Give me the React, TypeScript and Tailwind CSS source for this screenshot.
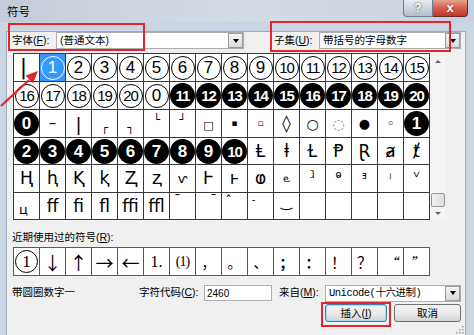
import { clsx } from "clsx"

type Item = { t: string; k?: "c" | "n"; c?: string }

const c = (t: string): Item => ({ t, k: "c" })
const n = (t: string): Item => ({ t, k: "n" })
const g = (t: string, cls = "text-[17px]"): Item => ({ t, c: cls })
const e: Item = { t: "" }

const rows: Item[][] = [
  [
    g("|", "text-[22px] -translate-x-[3px] -translate-y-[1px]"),
    c("1"), c("2"), c("3"), c("4"), c("5"), c("6"), c("7"), c("8"),
    c("9"), c("10"), c("11"), c("12"), c("13"), c("14"), c("15"),
  ],
  [
    c("16"), c("17"), c("18"), c("19"), c("20"), c("0"),
    n("11"), n("12"), n("13"), n("14"), n("15"), n("16"), n("17"), n("18"), n("19"), n("20"),
  ],
  [
    n("0"),
    g("–", "text-[15px]"),
    g("|", "text-[18px] translate-y-[1px]"),
    g("┌", "text-[11px] translate-y-[4px]"),
    g("┐", "text-[11px] translate-y-[4px]"),
    g("└", "text-[11px] -translate-y-[4px]"),
    g("┘", "text-[11px] -translate-y-[4px]"),
    g("□", "text-[11px] translate-y-[2px]"),
    g("▪", "text-[9px]"),
    g("▫", "text-[9px]"),
    g("◊", "text-[17px]"),
    g("○", "text-[14px]"),
    g("◌", "text-[14px] text-[#8a8a8a]"),
    g("●", "text-[13px]"),
    g("◦", "text-[13px]"),
    n("1"),
  ],
  [
    n("2"), n("3"), n("4"), n("5"), n("6"), n("7"), n("8"), n("9"), n("10"),
    g("Ⱡ"), g("ⱡ"), g("Ɫ"), g("Ᵽ"), g("Ɽ"), g("ⱥ"), g("ⱦ"),
  ],
  [
    g("Ⱨ"), g("ⱨ"), g("Ⱪ"), g("ⱪ"), g("Ⱬ"), g("ⱬ"),
    g("ⱱ", "text-[13px]"),
    g("Ⱶ"), g("ⱶ"), g("ⱷ"),
    g("ⱸ", "text-[10px]"),
    g("ⱹ", "text-[10px] -translate-y-[4px]"),
    g("ⱺ", "text-[10px] -translate-y-[4px]"),
    g("ⱻ", "text-[10px] -translate-y-[3px]"),
    g("ⱼ", "text-[11px] -translate-y-[4px]"),
    g("ⱽ", "text-[14px] -translate-y-[2px]"),
  ],
  [
    g("ц", "text-[13px] translate-y-[3px] -translate-x-[3px]"),
    g("ﬀ"), g("ﬁ"), g("ﬂ"), g("ﬃ"), g("ﬄ"),
    g("ˉ", "text-[14px] -translate-y-[6px] -translate-x-[5px]"),
    g("ˉ", "text-[14px] -translate-y-[6px] translate-x-[5px]"),
    g("ˆ", "text-[13px] -translate-y-[6px] -translate-x-[6px]"),
    g("-", "text-[10px] -translate-y-[6px] -translate-x-[7px]"),
    g("‿", "text-[14px] -translate-y-[4px]"),
    e, e, e, e, e,
  ],
]

const recent: Item[] = [
  c("1"),
  g("↓", "text-[18px] font-['Noto_Sans_CJK_SC',sans-serif]"),
  g("↑", "text-[18px] font-['Noto_Sans_CJK_SC',sans-serif]"),
  g("→", "text-[18px] font-['Noto_Sans_CJK_SC',sans-serif]"),
  g("←", "text-[18px] font-['Noto_Sans_CJK_SC',sans-serif]"),
  g("1.", "text-[16px] font-['Liberation_Serif',serif]"),
  g("(1)", "text-[14px] tracking-[-1px] font-['Liberation_Serif',serif]"),
  g("，", "text-[14px] font-['Noto_Sans_CJK_SC',sans-serif]"),
  g("。", "text-[14px] font-['Noto_Sans_CJK_SC',sans-serif]"),
  g("、", "text-[14px] font-['Noto_Sans_CJK_SC',sans-serif]"),
  g("；", "text-[14px] font-['Noto_Sans_CJK_SC',sans-serif] font-bold"),
  g("：", "text-[14px] font-['Noto_Sans_CJK_SC',sans-serif] font-bold"),
  g("！", "text-[15px] font-['Noto_Sans_CJK_SC',sans-serif]"),
  g("？", "text-[15px] font-['Noto_Sans_CJK_SC',sans-serif]"),
  g("“", "text-[14px] font-['Noto_Sans_CJK_SC',sans-serif] italic"),
  g("”", "text-[14px] font-['Noto_Sans_CJK_SC',sans-serif] italic"),
]

function Sym({ it, sel }: { it: Item; sel?: boolean }) {
  if (it.k) {
    const two = it.t.length > 1
    return (
      <div
        className={clsx(
          "flex shrink-0 items-center justify-center rounded-full font-['Liberation_Sans',sans-serif] leading-none",
          it.k === "n" ? "h-[25px] w-[25px] bg-black font-bold text-white" : "h-[24px] w-[24px] border",
          it.k === "c" && (sel ? "border-white text-white" : "border-black text-black"),
          two ? "text-[15px] tracking-[-1px]" : "text-[17px]",
        )}
      >
        {it.t}
      </div>
    )
  }
  return <span className={clsx("leading-none font-['DejaVu_Sans',sans-serif]", it.c)}>{it.t}</span>
}

function Arrow() {
  return (
    <span className="h-0 w-0 border-x-[3.5px] border-t-[4px] border-x-transparent border-t-black" />
  )
}

function Combo({ w, children, mono }: { w: string; children: React.ReactNode; mono?: boolean }) {
  return (
    <div className={clsx("flex h-[17px] border border-[#abadb3] bg-white", w)}>
      <div
        className={clsx(
          "flex flex-1 items-center pl-[3px] leading-none whitespace-nowrap",
          mono ? "text-[10.5px] font-['Liberation_Mono','Noto_Sans_CJK_SC',monospace] tracking-[-0.5px]" : "text-[10.5px]",
        )}
      >
        {children}
      </div>
      <div className="flex w-[15px] items-center justify-center border border-[#9a9a9a] bg-linear-to-b from-[#f6f6f6] to-[#d9d9d9]">
        <Arrow />
      </div>
    </div>
  )
}

function Btn({ w, children, focus }: { w: string; children: React.ReactNode; focus?: boolean }) {
  return (
    <div
      className={clsx(
        "flex h-[18px] items-center justify-center rounded-[3px] border bg-linear-to-b from-[#f4f4f4] via-[#ebebeb] to-[#d4d4d4] text-[10.5px] leading-none",
        focus ? "border-[#3c7fb1] shadow-[inset_0_0_0_1px_#a8dcf6]" : "border-[#707070]",
        w,
      )}
    >
      {children}
    </div>
  )
}

export default function App() {
  return (
    <div className="relative h-[335px] w-[474px] overflow-hidden bg-[#c9d5e2] font-['Liberation_Sans','Noto_Sans_CJK_SC',sans-serif] text-black">
      {/* title bar */}
      <div className="flex h-[22px] items-start bg-linear-to-r from-[#c3ccd8] via-[#d4dce6] to-[#c8d2de]">
        <span className="pt-[5px] pl-[7px] text-[11.5px] leading-[14px]">符号</span>
        <div className="mr-[6px] ml-auto flex">
          <div className="flex h-[17px] w-[30px] items-center justify-center rounded-bl-[4px] border border-t-0 border-[#6f7c8c] bg-linear-to-b from-[#e8edf3] to-[#b3bfcd] text-[12px] font-bold text-white [text-shadow:0_0_2px_#333]">
            ?
          </div>
          <div className="flex h-[17px] w-[35px] items-center justify-center rounded-br-[4px] border border-t-0 border-l-0 border-[#6b2a22] bg-linear-to-b from-[#e7a194] via-[#d45e4d] to-[#c2382a] text-[13px] font-bold text-white [text-shadow:0_0_2px_#5a1a12]">
            x
          </div>
        </div>
      </div>

      {/* dialog body */}
      <div className="relative ml-[7px] h-[303px] w-[458px] bg-[#f0f0f0] text-[10.5px] shadow-[0_0_0_1px_#9eacbd]">
        <div className="mt-[10px] flex h-[17px] items-center pl-[5px]">
          <span className="w-[44px]">
            字体(<span className="underline">F</span>):
          </span>
          <Combo w="w-[188px]">(普通文本)</Combo>
          <span className="ml-[30px] w-[45px]">
            子集(<span className="underline">U</span>):
          </span>
          <Combo w="w-[142px]">带括号的字母数字</Combo>
        </div>

        {/* symbol grid */}
        <div className="mt-[4px] ml-[6px] flex h-[167px]">
          <div className="grid grid-cols-[repeat(16,26px)] grid-rows-[28px_28px_28px_27px_28px_27px] border-t border-l border-[#3a3a3a] bg-white">
            {rows.map((row, r) =>
              row.map((it, i) => {
                const sel = r === 0 && i === 1
                return (
                  <div
                    key={`${r}-${i}`}
                    className={clsx(
                      "flex items-center justify-center overflow-hidden border-r border-b border-[#3a3a3a]",
                      sel && "bg-[#3399ff]",
                    )}
                  >
                    <Sym it={it} sel={sel} />
                  </div>
                )
              }),
            )}
          </div>
          <div className="flex w-[16px] flex-col bg-[#f3f3f3]">
            <div className="flex h-[16px] items-center justify-center">
              <span className="h-0 w-0 border-x-[3px] border-b-[3px] border-x-transparent border-b-[#606060]" />
            </div>
            <div className="flex-1" />
            <div className="mx-[1px] h-[14px] rounded-[2px] border border-[#979797] bg-linear-to-r from-[#f3f3f3] to-[#dcdcdc]" />
            <div className="flex h-[13px] items-center justify-center">
              <span className="h-0 w-0 border-x-[3px] border-t-[3px] border-x-transparent border-t-[#606060]" />
            </div>
          </div>
        </div>

        <div className="mt-[10px] h-[14px] pl-[5px] leading-[14px]">
          近期使用过的符号(<span className="underline">R</span>):
        </div>

        <div className="mt-[3px] ml-[6px] flex w-fit border-t border-l border-[#5a5a5a] bg-white">
          {recent.map((it, i) => (
            <div
              key={i}
              className="flex h-[28px] w-[26px] items-center justify-center overflow-hidden border-r border-b border-[#5a5a5a]"
            >
              {it.k ? (
                <div className="flex h-[23px] w-[23px] items-center justify-center rounded-full border border-black font-['Liberation_Serif',serif] text-[17px] leading-none">
                  1
                </div>
              ) : (
                <Sym it={it} />
              )}
            </div>
          ))}
        </div>

        <div className="mt-[9px] flex h-[16px] items-center pl-[5px]">
          <span className="w-[127px]">带圆圈数字一</span>
          <span className="w-[65px]">
            字符代码(<span className="underline">C</span>):
          </span>
          <div className="flex h-[16px] w-[68px] items-center border border-[#abadb3] bg-white pl-[2px] text-[10px]">
            2460
          </div>
          <span className="ml-[7px] w-[46px]">
            来自(<span className="underline">M</span>):
          </span>
          <Combo w="w-[136px]" mono>
            Unicode(十六进制)
          </Combo>
        </div>

        <div className="mt-[3px] flex justify-end gap-[7px] pr-[4px]">
          <Btn w="w-[62px]" focus>
            插入(<span className="underline">I</span>)
          </Btn>
          <Btn w="w-[67px]">取消</Btn>
        </div>

        <svg className="absolute right-[1px] bottom-[1px]" width="9" height="9" viewBox="0 0 9 9">
          <g fill="#a0a0a0">
            <rect x="7" y="1" width="1.5" height="1.5" />
            <rect x="4" y="4" width="1.5" height="1.5" />
            <rect x="7" y="4" width="1.5" height="1.5" />
            <rect x="1" y="7" width="1.5" height="1.5" />
            <rect x="4" y="7" width="1.5" height="1.5" />
            <rect x="7" y="7" width="1.5" height="1.5" />
          </g>
        </svg>
      </div>

      {/* red annotation boxes */}
      <div className="absolute top-[23px] left-[8px] h-[28px] w-[137px] border-2 border-[#e4252b]" />
      <div className="absolute top-[21px] left-[270px] h-[31px] w-[181px] border-2 border-[#e4252b]" />
      <div className="absolute top-[302px] left-[321px] h-[25px] w-[70px] border-2 border-[#e4252b]" />

      {/* red arrow */}
      <svg className="absolute top-0 left-0" width="50" height="115" viewBox="0 0 50 115">
        <line x1="1" y1="106" x2="29" y2="80" stroke="#e4252b" strokeWidth="2.2" />
        <polygon points="38,71 25.5,75.5 33,83.5" fill="#e4252b" />
      </svg>
    </div>
  )
}
